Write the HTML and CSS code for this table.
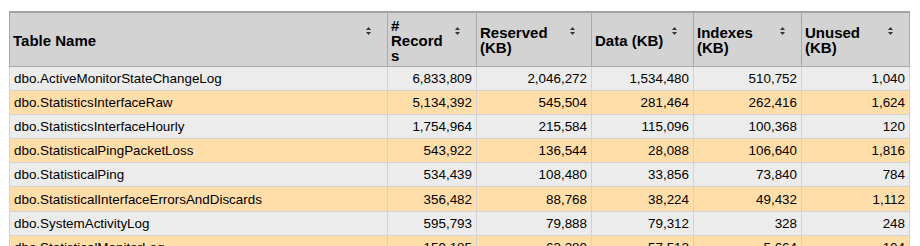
FILE: index.html
```html
<!DOCTYPE html>
<html>
<head>
<meta charset="utf-8">
<link rel="stylesheet" href="styles.css">
</head>
<body>
<table class="grid">
  <colgroup>
    <col class="c-name"><col class="c-rec"><col class="c-res"><col class="c-data"><col class="c-idx"><col class="c-unu">
  </colgroup>
  <thead>
    <tr>
      <th><div class="h"><span class="lbl">Table Name</span><svg class="sort" viewBox="0 0 7 10" width="7" height="10"><path d="M3.5 1 L6 4 H1 Z M3.5 9 L6 6 H1 Z" fill="#333"/></svg></div></th>
      <th><div class="h"><span class="lbl">#<br>Record<br>s</span><svg class="sort" viewBox="0 0 7 10" width="7" height="10"><path d="M3.5 1 L6 4 H1 Z M3.5 9 L6 6 H1 Z" fill="#333"/></svg></div></th>
      <th><div class="h"><span class="lbl">Reserved<br>(KB)</span><svg class="sort" viewBox="0 0 7 10" width="7" height="10"><path d="M3.5 1 L6 4 H1 Z M3.5 9 L6 6 H1 Z" fill="#333"/></svg></div></th>
      <th><div class="h"><span class="lbl">Data (KB)</span><svg class="sort" viewBox="0 0 7 10" width="7" height="10"><path d="M3.5 1 L6 4 H1 Z M3.5 9 L6 6 H1 Z" fill="#333"/></svg></div></th>
      <th><div class="h"><span class="lbl">Indexes<br>(KB)</span><svg class="sort" viewBox="0 0 7 10" width="7" height="10"><path d="M3.5 1 L6 4 H1 Z M3.5 9 L6 6 H1 Z" fill="#333"/></svg></div></th>
      <th><div class="h"><span class="lbl">Unused<br>(KB)</span><svg class="sort" viewBox="0 0 7 10" width="7" height="10"><path d="M3.5 1 L6 4 H1 Z M3.5 9 L6 6 H1 Z" fill="#333"/></svg></div></th>
    </tr>
  </thead>
  <tbody>
    <tr class="even"><td>dbo.ActiveMonitorStateChangeLog</td><td class="n">6,833,809</td><td class="n">2,046,272</td><td class="n">1,534,480</td><td class="n">510,752</td><td class="n">1,040</td></tr>
    <tr class="odd"><td>dbo.StatisticsInterfaceRaw</td><td class="n">5,134,392</td><td class="n">545,504</td><td class="n">281,464</td><td class="n">262,416</td><td class="n">1,624</td></tr>
    <tr class="even"><td>dbo.StatisticsInterfaceHourly</td><td class="n">1,754,964</td><td class="n">215,584</td><td class="n">115,096</td><td class="n">100,368</td><td class="n">120</td></tr>
    <tr class="odd"><td>dbo.StatisticalPingPacketLoss</td><td class="n">543,922</td><td class="n">136,544</td><td class="n">28,088</td><td class="n">106,640</td><td class="n">1,816</td></tr>
    <tr class="even"><td>dbo.StatisticalPing</td><td class="n">534,439</td><td class="n">108,480</td><td class="n">33,856</td><td class="n">73,840</td><td class="n">784</td></tr>
    <tr class="odd"><td>dbo.StatisticalInterfaceErrorsAndDiscards</td><td class="n">356,482</td><td class="n">88,768</td><td class="n">38,224</td><td class="n">49,432</td><td class="n">1,112</td></tr>
    <tr class="even"><td>dbo.SystemActivityLog</td><td class="n">595,793</td><td class="n">79,888</td><td class="n">79,312</td><td class="n">328</td><td class="n">248</td></tr>
    <tr class="odd"><td>dbo.StatisticalMonitorLog</td><td class="n">159,185</td><td class="n">63,280</td><td class="n">57,512</td><td class="n">5,664</td><td class="n">104</td></tr>
  </tbody>
</table>
</body>
</html>
```

FILE: styles.css
```css
html, body {
  margin: 0;
  padding: 0;
  background: #ffffff;
}
body {
  padding: 11px 0 0 9px;
  font-family: "Liberation Sans", Arial, sans-serif;
  font-size: 13.4px;
  color: #000;
}
.grid {
  border-collapse: collapse;
  table-layout: fixed;
  width: 901px;
  border-top: 2px solid #a3a3a3;
  border-left: 1px solid #a3a3a3;
  border-right: 1px solid #a3a3a3;
}
.c-name { width: 378px; }
.c-rec { width: 89px; }
.c-res { width: 115px; }
.c-data { width: 102px; }
.c-idx { width: 108px; }
.c-unu { width: 108px; }

.grid th {
  background: #d3d3d3;
  border: 1px solid #a9a9a9;
  border-top: none;
  padding: 4px 3px 3px 3px;
  text-align: left;
  vertical-align: middle;
  font-weight: bold;
  font-size: 15px;
  line-height: 15px;
  height: 46px;
}
.h {
  display: flex;
  justify-content: space-between;
  align-items: center;
  min-height: 46px;
}
.lbl {
  display: block;
}
.sort {
  flex: none;
  align-self: flex-start;
  margin-top: 9px;
  margin-right: 12px;
}
.grid td {
  height: 23.1px;
  padding: 0 4px;
  border: 1px solid #d3d3d3;
  line-height: 15px;
  white-space: nowrap;
}
.grid td.n {
  text-align: right;
}
tr.even td { background: #ececec; }
tr.odd td { background: #ffdeaa; }
```
